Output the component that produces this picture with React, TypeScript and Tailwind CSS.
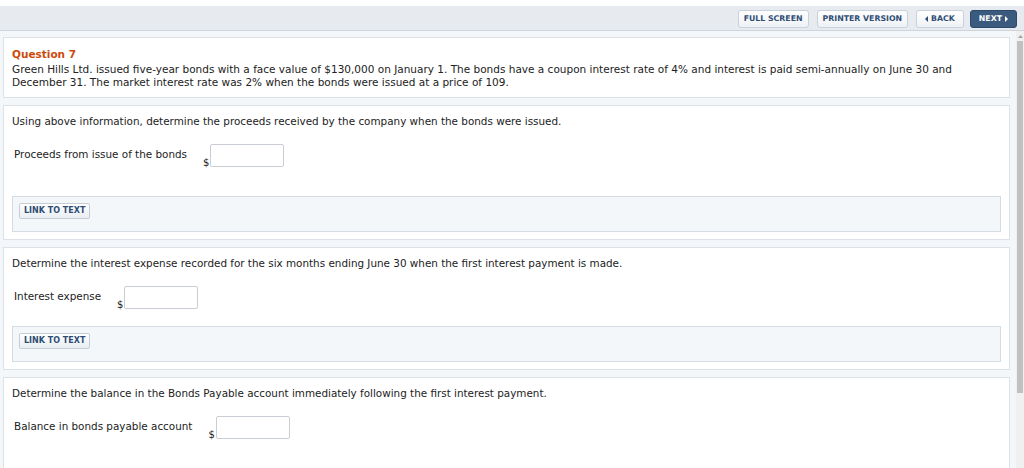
import React from "react";

function TopButton({ children, dark, px = "px-[5px]" }: { children: React.ReactNode; dark?: boolean; px?: string }) {
  return (
    <button
      type="button"
      className={
        dark
          ? `flex h-[18px] items-center gap-[3px] rounded-[3px] border border-[#2c4a6b] bg-[#3b5b7e] ${px} text-[7.8px] font-bold leading-none text-white`
          : `flex h-[18px] items-center gap-[3px] rounded-[3px] border border-[#c9d1db] bg-gradient-to-b from-white to-[#eef1f5] ${px} text-[7.8px] font-bold leading-none text-[#2f4d74]`
      }
    >
      {children}
    </button>
  );
}

function Arrow({ dir, color }: { dir: "left" | "right"; color: string }) {
  return (
    <svg width="3" height="6" viewBox="0 0 3 6">
      <path d={dir === "left" ? "M3 0 L0 3 L3 6 Z" : "M0 0 L3 3 L0 6 Z"} fill={color} />
    </svg>
  );
}

function LinkBox() {
  return (
    <div className="h-[36px] border border-[#d5dbe2] bg-[#f4f7fa] pl-[6px] pt-[6px]">
      <button
        type="button"
        className="block h-[16px] rounded-[2px] border border-[#c6cdd6] bg-gradient-to-b from-white to-[#e9edf2] px-[4px] text-[8px] font-bold leading-none text-[#2f4d74]"
      >
        LINK TO TEXT
      </button>
    </div>
  );
}

function AnswerRow({ label }: { label: string }) {
  return (
    <div className="flex items-start">
      <span className="pl-[2px] pt-[4px] text-[10.4px] leading-[13px]">{label}</span>
      <span className="ml-[16px] mt-[12px] text-[10px] leading-[13px]">$</span>
      <input
        type="text"
        className="ml-[1px] h-[23px] w-[74px] rounded-[2px] border border-[#c9ced4] bg-white outline-none"
      />
    </div>
  );
}

export default function App() {
  return (
    <div className="flex h-[468px] w-full flex-col overflow-hidden bg-white font-['DejaVu_Sans',sans-serif] text-[#222]">
      <div className="h-[6px] shrink-0 bg-white" />
      <div className="flex h-[25px] shrink-0 items-center justify-end border-b border-[#cdd4dc] bg-[#e7eaee] pr-[7px] pt-[1px]">
        <TopButton>FULL SCREEN</TopButton>
        <div className="ml-[8px]">
          <TopButton>PRINTER VERSION</TopButton>
        </div>
        <div className="ml-[8px]">
          <TopButton px="px-[8px]">
            <Arrow dir="left" color="#2f4d74" />
            BACK
          </TopButton>
        </div>
        <div className="ml-[6px]">
          <TopButton dark px="px-[8px]">
            NEXT
            <Arrow dir="right" color="#ffffff" />
          </TopButton>
        </div>
      </div>
      <div className="flex min-h-0 flex-1">
        <div className="flex flex-1 flex-col gap-[7px] bg-[#f4f7fa] pl-[3px] pr-[6px] pt-[6px]">
          <div className="h-[61px] shrink-0 border border-[#dde2e8] bg-white px-[8px] pt-[8px]">
            <div className="text-[10.5px] font-bold leading-[16px] text-[#cc4b0c]">Question 7</div>
            <p className="pt-[1px] text-[10.5px] leading-[13px]">
              Green Hills Ltd. issued five-year bonds with a face value of $130,000 on January 1. The bonds have a
              coupon interest rate of 4% and interest is paid semi-annually on June 30 and
              <br />
              December 31. The market interest rate was 2% when the bonds were issued at a price of 109.
            </p>
          </div>
          <div className="h-[135px] shrink-0 border border-[#dde2e8] bg-white px-[8px] pt-[9px]">
            <p className="text-[10.4px] leading-[13px]">
              Using above information, determine the proceeds received by the company when the bonds were issued.
            </p>
            <div className="mt-[16px]">
              <AnswerRow label="Proceeds from issue of the bonds" />
            </div>
            <div className="mt-[27px]">
              <LinkBox />
            </div>
          </div>
          <div className="h-[123px] shrink-0 border border-[#dde2e8] bg-white px-[8px] pt-[9px]">
            <p className="text-[10.4px] leading-[13px]">
              Determine the interest expense recorded for the six months ending June 30 when the first interest
              payment is made.
            </p>
            <div className="mt-[16px]">
              <AnswerRow label="Interest expense" />
            </div>
            <div className="mt-[15px]">
              <LinkBox />
            </div>
          </div>
          <div className="h-[100px] shrink-0 border border-[#dde2e8] bg-white px-[8px] pt-[9px]">
            <p className="text-[10.4px] leading-[13px]">
              Determine the balance in the Bonds Payable account immediately following the first interest payment.
            </p>
            <div className="mt-[16px]">
              <AnswerRow label="Balance in bonds payable account" />
            </div>
          </div>
        </div>
        <div className="flex w-[8px] shrink-0 flex-col bg-[#f0f0f0]">
          <div className="flex h-[10px] items-center justify-center">
            <svg width="5" height="3" viewBox="0 0 5 3">
              <path d="M0 3 L2.5 0 L5 3 Z" fill="#a3a3a3" />
            </svg>
          </div>
          <div className="mx-[1px] h-[352px] bg-[#c1c1c1]" />
        </div>
      </div>
    </div>
  );
}
